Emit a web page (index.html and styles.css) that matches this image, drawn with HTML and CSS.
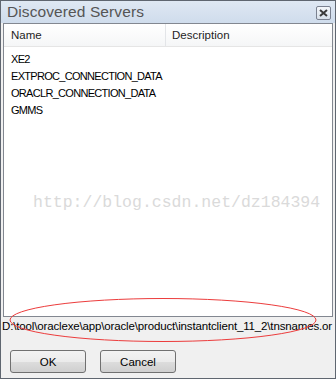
FILE: index.html
```html
<!DOCTYPE html>
<html>
<head>
<meta charset="utf-8">
<link rel="stylesheet" href="styles.css">
</head>
<body>
<div class="window">
  <div class="titlebar">
    <span class="title">Discovered Servers</span>
    <span class="close"><svg width="9" height="8" viewBox="0 0 9 8"><path d="M1 1 L8 7 M8 1 L1 7" stroke="#3a3a3a" stroke-width="2"/></svg></span>
  </div>
  <div class="client">
    <div class="list">
      <div class="header">
        <div class="col col-name">Name</div>
        <div class="col col-desc">Description</div>
      </div>
      <div class="rows">
        <div class="row">XE2</div>
        <div class="row">EXTPROC_CONNECTION_DATA</div>
        <div class="row">ORACLR_CONNECTION_DATA</div>
        <div class="row">GMMS</div>
      </div>
      <div class="watermark">http://blog.csdn.net/dz184394</div>
    </div>
    <div class="path">D:\tool\oraclexe\app\oracle\product\instantclient_11_2\tnsnames.or</div>
    <div class="buttons">
      <button class="btn">OK</button>
      <button class="btn">Cancel</button>
    </div>
    <svg class="ellipse" width="336" height="379" viewBox="0 0 336 379"><ellipse cx="163" cy="320" rx="153" ry="21.5" fill="none" stroke="#ec3c3c" stroke-width="1"/></svg>
  </div>
</div>
</body>
</html>
```
FILE: styles.css
```css
html, body { margin: 0; padding: 0; }
body { width: 336px; height: 379px; overflow: hidden; font-family: "Liberation Sans", Arial, sans-serif; }
.window {
  box-sizing: border-box;
  width: 336px; height: 379px;
  border: 1px solid #5f6670;
  background: #f0f0f0;
  display: flex; flex-direction: column;
  position: relative;
}
.titlebar {
  height: 22px;
  background: linear-gradient(#dfe8f3, #cfdcec);
  display: flex; align-items: center; justify-content: space-between;
  padding: 0 4px 0 6px;
  flex: none;
}
.title { font-size: 15.5px; color: #555; letter-spacing: 0.1px; }
.close {
  width: 13px; height: 12px;
  border: 1px solid #7a8190; border-radius: 2px;
  background: linear-gradient(#f4f7fb, #d7e0ea);
  display: flex; align-items: center; justify-content: center;
  margin-top: 2px;
}
.client {
  flex: 1;
  background: #f0f0f0;
  padding: 0 2px 0 2px;
  display: flex; flex-direction: column;
}
.list {
  position: relative;
  height: 292px;
  background: #fff;
  border: 1px solid #828790;
  flex: none;
  overflow: hidden;
}
.header {
  display: flex; height: 22px;
  background: linear-gradient(#ffffff, #f5f6f7);
  border-bottom: 1px solid #e5e5e5;
}
.col { font-size: 11.5px; color: #1e1e1e; display: flex; align-items: center; padding-left: 7px; }
.col-name { width: 154px; border-right: 1px solid #e3e5e8; }
.col-desc { flex: 1; padding-left: 6px; }
.rows { padding: 4px 0 0 7px; }
.row { font-size: 11px; letter-spacing: -0.7px; word-spacing: 0; height: 17px; line-height: 17px; color: #000; }
.watermark {
  position: absolute; left: 29px; top: 169px;
  font-family: "Liberation Mono", monospace;
  font-size: 16.5px; color: #dadada;
  white-space: nowrap;
}
.path {
  font-size: 11.5px; letter-spacing: -0.15px; color: #000; white-space: nowrap; overflow: hidden;
  height: 14px; line-height: 14px; margin-top: 2px; margin-left: -1px; margin-right: -2px;
}
.buttons { display: flex; gap: 14px; padding: 17px 0 0 7px; }
.btn {
  width: 76px; height: 23px;
  border: 1px solid #707070; border-radius: 3px;
  background: linear-gradient(#f2f2f2 0%, #ebebeb 50%, #dddddd 51%, #cfcfcf 100%);
  font-family: "Liberation Sans", Arial, sans-serif; font-size: 11.5px; color: #000;
  padding: 0;
}
.ellipse { position: absolute; left: -1px; top: -1px; pointer-events: none; }
```
